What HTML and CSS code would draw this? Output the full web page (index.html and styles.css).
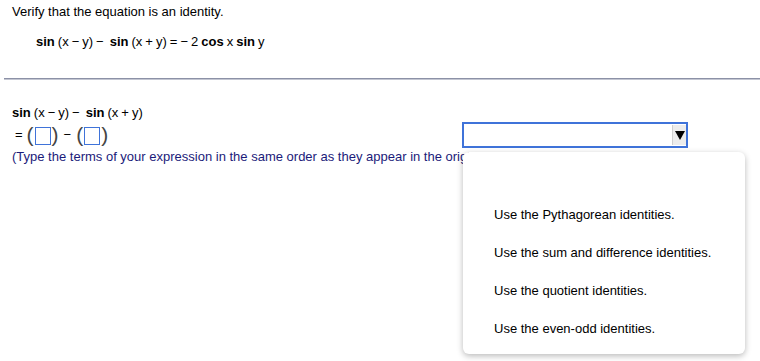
FILE: index.html
```html
<!DOCTYPE html>
<html>
<head>
  <meta charset="UTF-8">
  <title>Verify identity</title>
  <link rel="stylesheet" href="styles.css">
</head>
<body>
<div class="question">
  <div class="prompt">Verify that the equation is an identity.</div>
  <div class="equation">
    <b>sin</b> (x − y) − &nbsp;<b>sin</b> (x + y) = − 2 <b>cos</b> x <b>sin</b> y
  </div>
</div>
<hr class="divider">
<div class="answer">
  <div class="line"><b>sin</b> (x − y) − &nbsp;<b>sin</b> (x + y)</div>
  <div class="line eq">
    <span class="eqsign">=</span>
    <span class="paren">(</span><span class="box"></span><span class="paren">)</span>
    <span class="minus">−</span>
    <span class="paren">(</span><span class="box"></span><span class="paren">)</span>
  </div>
  <div class="hint">(Type the terms of your expression in the same order as they appear in the original expression.)</div>
  <div class="picker">
    <div class="select"><span class="arrow"></span></div>
    <div class="menu">
      <div class="option">Use the Pythagorean identities.</div>
      <div class="option">Use the sum and difference identities.</div>
      <div class="option">Use the quotient identities.</div>
      <div class="option">Use the even-odd identities.</div>
    </div>
  </div>
</div>
</body>
</html>
```

FILE: styles.css
```css
html {
  background: #ffffff;
}

body {
  margin: 0;
  min-height: 361px;
  font-family: "Liberation Sans", Arial, sans-serif;
  font-size: 13px;
  color: #000000;
}

.question {
  padding: 3px 12px 0;
}

.prompt {
  line-height: 18px;
}

.equation {
  padding: 12px 0 0 24px;
  line-height: 18px;
  word-spacing: -0.6px;
}

.divider {
  margin: 27px 0 0 4px;
  border: 0;
  border-top: 1px solid #8c91a6;
  border-bottom: 1px solid #c3c6d2;
  height: 0;
}

.answer {
  position: relative;
  padding: 24px 0 0 12px;
}

.line {
  line-height: 18px;
  word-spacing: -0.6px;
}

.eq {
  display: flex;
  align-items: center;
  height: 26px;
  padding-left: 3px;
}

.eqsign {
  margin-right: 4px;
}

.paren {
  font-size: 21px;
  color: #444444;
  line-height: 24px;
}

.box {
  display: inline-block;
  width: 14px;
  height: 16px;
  border: 1px solid #3f73d9;
  margin: 1px 1px 0;
}

.minus {
  margin: 0 5px;
}

.hint {
  line-height: 18px;
  color: #1b1b7a;
  white-space: nowrap;
}

.picker {
  position: absolute;
  left: 462px;
  top: 42px;
  z-index: 1;
}

.select {
  width: 222px;
  height: 22px;
  border: 2px solid #3f73d9;
  background: #ffffff;
  position: relative;
}

.arrow {
  position: absolute;
  right: 0;
  top: 1px;
  width: 13px;
  height: 20px;
  background: #ececec;
  border-left: 1px solid #cfcfcf;
}

.arrow::after {
  content: "";
  position: absolute;
  left: 2px;
  top: 6px;
  border-left: 5px solid transparent;
  border-right: 5px solid transparent;
  border-top: 9px solid #000000;
}

.menu {
  position: absolute;
  left: 1px;
  top: 30px;
  width: 282px;
  height: 202px;
  background: #ffffff;
  border-radius: 6px;
  box-shadow: 0 2px 6px rgba(0, 0, 0, 0.28);
  padding-top: 54px;
  box-sizing: border-box;
}

.option {
  padding-left: 31px;
  height: 38px;
  line-height: 18px;
}
```
